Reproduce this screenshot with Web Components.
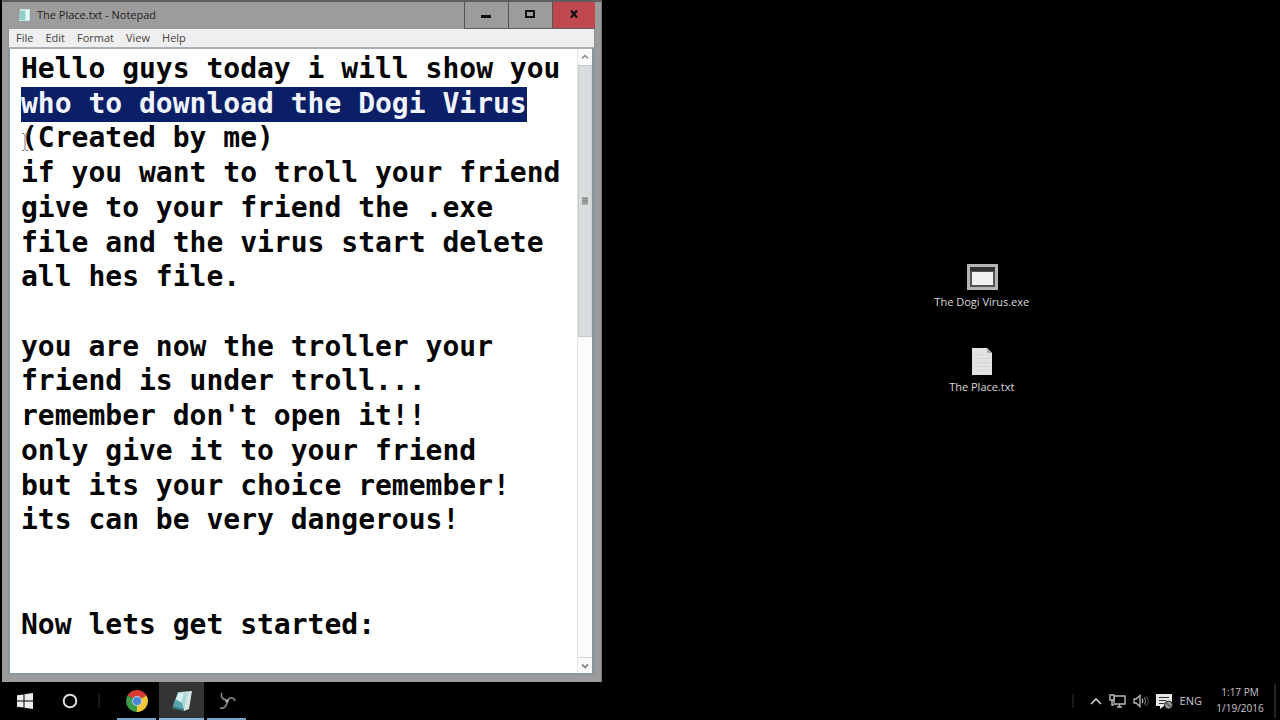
<!DOCTYPE html>
<html lang="en">
<head>
<meta charset="utf-8">
<title>Desktop</title>
<style>
html, body { height: 100%; margin: 0; background: #000; overflow: hidden; font-family: "Open Sans", "Noto Sans", sans-serif; }
</style>
</head>
<body>
<desk-top>
  <notepad-window slot="window" heading="The Place.txt - Notepad">Hello guys today i will show you
who to download the Dogi Virus
(Created by me)
if you want to troll your friend
give to your friend the .exe
file and the virus start delete
all hes file.

you are now the troller your
friend is under troll...
remember don't open it!!
only give it to your friend
but its your choice remember!
its can be very dangerous!


Now lets get started:</notepad-window>
  <desktop-icon slot="icons" label="The Dogi Virus.exe">
    <svg width="32" height="28" viewBox="0 0 32 28"><path fill="#b4b4b4" d="M1 1h31v26H1z"/><path fill="#555" d="M4 4h25v20H4z"/><path fill="#333" d="M4 4h25v4H4z"/><path fill="#f1f1f1" d="M6 9h21v13H6z"/></svg>
  </desktop-icon>
  <desktop-icon slot="icons" label="The Place.txt">
    <svg width="20" height="28" viewBox="0 0 20 28"><path fill="#e2e2e2" d="M0 0h15l5 5v22H0z"/><path fill="#aaa" d="M15 0v5h5z"/><path stroke="#d3d3d3" d="M3 6.500h9M3 10.500h14M3 14.500h14M3 18.500h14M3 22.500h14"/></svg>
  </desktop-icon>
  <task-bar slot="taskbar"></task-bar>
</desk-top>
<script>
const attach = (el, html) => { el.attachShadow({ mode: 'open' }).innerHTML = html; };

customElements.define('desk-top', class extends HTMLElement {
  constructor() {
    super();
    attach(this, `<style>
      :host { display: grid; grid-template-rows: minmax(0, 1fr) 38px; height: 100vh; background: #000; }
      main { display: grid; grid-template-columns: minmax(0, 47fr) minmax(0, 53fr); position: relative; min-height: 0; }
      .icons { display: flex; flex-direction: column; align-items: center; gap: 38px; padding: 263px 0 0 82px; }
    </style>
    <main><slot name="window"></slot><div class="icons"><slot name="icons"></slot></div></main>
    <slot name="taskbar"></slot>`);
  }
});

customElements.define('desktop-icon', class extends HTMLElement {
  constructor() {
    super();
    attach(this, `<style>
      :host { display: block; }
      button { display: flex; flex-direction: column; align-items: center; gap: 3px; margin: 0; padding: 0; border: 0; background: none; color: #d8d8d8; font: 11px/16px "Open Sans", sans-serif; }
      ::slotted(svg) { display: block; }
    </style><button type="button"><slot></slot><span></span></button>`);
    this.shadowRoot.querySelector('span').textContent = this.getAttribute('label');
  }
});

customElements.define('window-button', class extends HTMLElement {
  constructor() {
    super();
    attach(this, `<style>
      :host { display: flex; width: 44px; }
      :host([kind="close"]) { width: 43px; --face: #be484e; }
      button { flex: 1; display: grid; place-items: center; margin: 0; padding: 0 0 2px; border: 0; border-left: 1px solid #555; border-bottom: 1px solid #606060; background: var(--face, #9c9c9c); }
    </style><button type="button"><svg width="12" height="12" viewBox="0 0 12 12" fill="none" stroke="#111" stroke-width="2"></svg></button>`);
    const kind = this.getAttribute('kind');
    this.shadowRoot.querySelector('button').setAttribute('aria-label', kind);
    this.shadowRoot.querySelector('svg').innerHTML = {
      minimize: '<path stroke-width="3" d="M1 8.500h10"/>',
      maximize: '<path d="M2 3h8v6H2z"/>',
      close: '<path stroke-width="2.200" d="M3 2.500l6 7M9 2.500l-6 7"/>'
    }[kind];
  }
});

customElements.define('scroll-bar', class extends HTMLElement {
  constructor() {
    super();
    attach(this, `<style>
      :host { display: grid; grid-template-rows: 16px minmax(0, 45fr) minmax(0, 53fr) 16px; width: 15px; background: #fbfbfb; border-left: 1px solid #e2e6e8; box-sizing: border-box; }
      button { display: grid; place-items: center; margin: 0; padding: 0; border: 0; background: #fafafa; }
      .thumb { display: grid; place-items: center; background: #dadddd; border: 1px solid #c5cacc; border-right-color: #cbd5da; }
      .down { border-top: 1px solid #d4d4d4; }
    </style>
    <button type="button" aria-label="Scroll up"><svg width="8" height="6" viewBox="0 0 8 6"><path fill="none" stroke="#888" stroke-width="1.500" d="M1 4.500l3-3 3 3"/></svg></button>
    <div class="thumb"><svg width="6" height="8" viewBox="0 0 6 8"><path fill="#aaa" d="M0 0h6v8H0z"/><path stroke="#888" d="M0 1.500h6M0 3.500h6M0 5.500h6"/></svg></div>
    <div></div>
    <button class="down" type="button" aria-label="Scroll down"><svg width="8" height="6" viewBox="0 0 8 6"><path fill="none" stroke="#888" stroke-width="1.800" d="M1 1.500l3 3 3-3"/></svg></button>`);
  }
});

customElements.define('notepad-window', class extends HTMLElement {
  connectedCallback() {
    if (this.shadowRoot) return;
    attach(this, `<style>
      :host { display: flex; flex-direction: column; min-height: 0; margin-left: 2px; box-sizing: border-box; background: #9c9c9c; border-top: 2px solid #5e5e5e; border-right: 1px solid #777; padding: 0 6px 7px; color: #222; font-size: 11px; line-height: 16px; }
      header { display: flex; align-items: stretch; height: 27px; padding-left: 10px; }
      h1 { flex: 1; display: flex; align-items: center; gap: 5px; margin: 0; padding-bottom: 2px; font: inherit; }
      nav { display: flex; align-items: center; gap: 12px; height: 18px; padding: 0 7px; background: #efefef; border: 0 solid #8b959c; border-width: 0 1px; }
      nav button { margin: 0; padding: 0; border: 0; background: none; color: #444; font: 11px/16px "Open Sans", sans-serif; }
      .client { flex: 1; display: grid; grid-template-columns: minmax(0, 1fr) 15px; min-height: 0; position: relative; border: 2px solid #8b959c; border-top-color: #a9b1b6; border-right-width: 3px; background: #fff; }
      textarea { display: block; width: 100%; height: 100%; box-sizing: border-box; margin: 0; border: 0; outline: 0; resize: none; overflow: hidden; padding: 3px 0 0 11px; background: #fff; color: #050505; font: bold 28px/1.24 "DejaVu Sans Mono", monospace; white-space: pre; }
      textarea::selection { background: #0a1f66; color: #f2f5ff; }
      .beam { position: absolute; left: 11px; top: 84px; }
    </style>
    <header>
      <h1><svg width="14" height="14" viewBox="0 0 14 14"><path fill="#c7e9e6" d="M2 1h10v12H1z"/><path fill="#8fcfca" d="M2 3h5v9H1z"/><path fill="#e8f5f4" d="M8 2h3v10H8z"/></svg><span></span></h1>
      <window-button kind="minimize"></window-button><window-button kind="maximize"></window-button><window-button kind="close"></window-button>
    </header>
    <nav><button type="button">File</button><button type="button">Edit</button><button type="button">Format</button><button type="button">View</button><button type="button">Help</button></nav>
    <div class="client"><textarea aria-label="Document text" spellcheck="false"></textarea><scroll-bar></scroll-bar>
      <svg class="beam" width="8" height="18" viewBox="0 0 8 18"><path fill="none" stroke="#8a7777" d="M1 .5h2l1 1 1-1h2M4 1.500v15M1 17.500h2l1-1 1 1h2"/></svg>
    </div>`);
    this.shadowRoot.querySelector('h1 span').textContent = this.getAttribute('heading');
    const area = this.shadowRoot.querySelector('textarea');
    area.value = this.textContent;
    const line = 'who to download the Dogi Virus';
    const start = area.value.indexOf(line);
    area.focus({ preventScroll: true });
    area.setSelectionRange(start, start + line.length);
  }
});

customElements.define('task-button', class extends HTMLElement {
  constructor() {
    super();
    attach(this, `<style>
      :host { display: flex; width: 45px; }
      button { flex: 1; display: grid; place-items: center; margin: 0; padding: 2px 0 0; border: 0; border-bottom: 2px solid transparent; background: none; }
      :host([running]) button { margin: 0 3px; border-color: #76a5c9; }
      :host([active]) button { margin: 0; background: #343434; border-color: #85b5d8; }
      ::slotted(svg) { display: block; }
    </style><button type="button"><slot></slot></button>`);
    this.shadowRoot.querySelector('button').setAttribute('aria-label', this.getAttribute('label'));
  }
});

customElements.define('task-bar', class extends HTMLElement {
  constructor() {
    super();
    attach(this, `<style>
      :host { display: flex; justify-content: space-between; background: #000; color: #c8c8c8; font-size: 11px; line-height: 16px; }
      .apps { display: flex; padding-left: 2px; }
      .sep { align-self: center; width: 2px; height: 14px; margin: 0 14px 0 6px; background: #191919; }
      .tray { display: flex; align-items: center; gap: 7px; }
      .tray svg { display: block; }
      .tray .edge { align-self: stretch; width: 2px; margin: 2px 4px 2px 0; background: #242424; }
      .clock { display: block; width: 54px; margin-left: 4px; padding-bottom: 2px; text-align: center; font-size: 10px; }
      .clock span { display: block; }
      .tray .sep { margin: 0 9px 0 0; }
    </style>
    <div class="apps">
      <task-button label="Start"><svg width="16" height="16" viewBox="0 0 16 16" fill="#eee"><path d="M0 2.300L6.500 1.400V7.500H0zM7.500 1.200L16 0V7.500H7.500zM0 8.500H6.500V14.600L0 13.700zM7.500 8.500H16V16L7.500 14.800z"/></svg></task-button>
      <task-button label="Cortana"><svg width="16" height="16" viewBox="0 0 16 16"><circle cx="8" cy="8" r="6.300" fill="none" stroke="#ddd" stroke-width="2"/></svg></task-button>
      <div class="sep"></div>
      <task-button label="Chrome" running><svg width="22" height="22" viewBox="0 0 22 22"><path fill="#d83b34" d="M11 11L1.500 5.500A11 11 0 0 1 20.500 5.500z"/><path fill="#f2ca3a" d="M11 11L20.500 5.500A11 11 0 0 1 11 22z"/><path fill="#3c9e4c" d="M11 11L11 22A11 11 0 0 1 1.500 5.500z"/><path fill="#d83b34" d="M11 6H20.800L20 4.500 11 3z"/><path fill="#f2ca3a" d="M15.300 13.500L10.500 22 13 21.800 20 16z"/><path fill="#3c9e4c" d="M6.700 13.500L1.500 5.500 1 8 3 14z"/><circle cx="11" cy="11" r="5" fill="#b9cdee"/><circle cx="11" cy="11" r="4" fill="#4e86d8"/></svg></task-button>
      <task-button label="Notepad" active><svg width="22" height="22" viewBox="0 0 22 22"><path fill="#d8e6e4" d="M9 2L21 1 18 19 13 21z"/><path fill="#a8d8d8" d="M7 2L17 3 13 20 2 17z"/><path fill="#57a5ab" d="M4 9L11 13 13 20 2 17z"/><path fill="#d9f1ef" d="M8 3L13 3.500 10 12 5 9z"/><path fill="#388087" d="M2 16L13 19V21L1 18z"/></svg></task-button>
      <task-button label="OBS" running><svg width="20" height="20" viewBox="0 0 20 20" fill="none" stroke="#8d8d8d" stroke-width="1.500"><path d="M5 2C3 5 5 8 9 9M18 10C17 6 13 6 11 9M3 17C7 18 10 15 10 11"/><circle cx="10" cy="10" r="1" stroke="#bbb"/></svg></task-button>
    </div>
    <div class="tray">
      <div class="sep"></div>
      <svg width="12" height="8" viewBox="0 0 12 8"><path fill="none" stroke="#ccc" stroke-width="1.600" d="M1 7l5-5 5 5"/></svg>
      <svg width="17" height="14" viewBox="0 0 17 14" fill="none" stroke="#bbb" stroke-width="1.400"><path d="M5 2H16V10H5zM8 13H13M10.500 10V13"/><path fill="#000" d="M1 1H5V6H1zM3 6V11H5"/></svg>
      <svg width="16" height="14" viewBox="0 0 16 14" fill="none" stroke="#bbb" stroke-width="1.300"><path d="M1 5H3L7 1.500V12.500L3 9H1z"/><path d="M9 5C10 6 10 8 9 9"/><path stroke="#777" d="M11 3.500C13 5.500 13 8.500 11 10.500"/><path stroke="#444" d="M13 2C16 5 16 9 13 12"/></svg>
      <svg width="17" height="17" viewBox="0 0 17 17"><path fill="#e8e8e8" d="M0 1H16V13H8L4 16V13H0z"/><path stroke="#333" d="M3 4.500H13M3 7.500H10M3 10.500H8"/><circle cx="12.500" cy="12" r="4" fill="#999" stroke="#222"/><path stroke="#222" d="M10 9.500l5 5"/></svg>
      <span>ENG</span>
      <time class="clock" datetime="2016-01-19T13:17"><span>1:17 PM</span><span>1/19/2016</span></time>
      <div class="edge"></div>
    </div>`);
  }
});
</script>
</body>
</html>
